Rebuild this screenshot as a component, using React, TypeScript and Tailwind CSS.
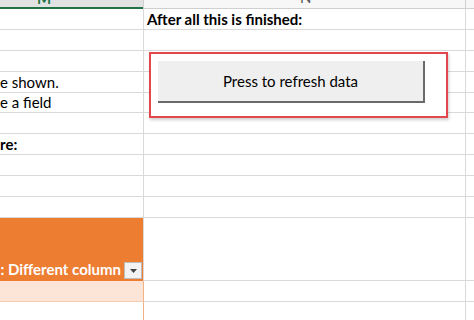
const rows = [
  { h: 21, m: "", n: "After all this is finished:", nBold: true },
  { h: 21, m: "", n: "" },
  { h: 21, m: "", n: "" },
  { h: 21, m: "e shown.", n: "" },
  { h: 20, m: "e a field", n: "" },
  { h: 21, m: "", n: "" },
  { h: 21, m: "re:", mBold: true, n: "" },
  { h: 21, m: "", n: "" },
  { h: 21, m: "", n: "" },
  { h: 21, m: "", n: "" },
];

const Cell = ({
  text,
  bold,
  className,
}: {
  text?: string;
  bold?: boolean;
  className?: string;
}) => (
  <div
    className={`flex items-end overflow-hidden whitespace-nowrap border-b border-[#d9d9d9] pb-[1px] ${className ?? ""}`}
  >
    <span className={bold ? "font-bold" : ""}>{text}</span>
  </div>
);

export default function App() {
  return (
    <div
      className="relative h-[320px] w-[474px] overflow-hidden bg-white text-[15px] leading-[18px] text-black"
      style={{ fontFamily: "Lato, 'Liberation Sans', sans-serif" }}
    >
      {/* column headers */}
      <div className="flex h-[9px]">
        <div className="relative w-[143px] overflow-hidden border-b-2 border-[#217346] bg-[#e2e2e2]">
          <span className="absolute left-[37px] top-[-11px] font-bold text-[#217346]">M</span>
        </div>
        <div className="relative w-[322px] overflow-hidden border-b border-l border-[#cfcfcf] bg-[#f7f7f7]">
          <span className="absolute left-[156px] top-[-12px] text-[#555]">N</span>
        </div>
        <div className="flex-1 border-b border-l border-[#cfcfcf] bg-[#f7f7f7]" />
      </div>

      {rows.map((r, i) => (
        <div key={i} className="flex" style={{ height: r.h }}>
          <Cell text={r.m} bold={r.mBold} className="w-[143px]" />
          <Cell
            text={r.n}
            bold={r.nBold}
            className="w-[322px] border-l border-l-[#d9d9d9] pl-[3px]"
          />
          <Cell className="flex-1 border-l border-l-[#d9d9d9]" />
        </div>
      ))}

      {/* orange table header */}
      <div className="flex h-[63px]">
        <div className="flex w-[143px] items-end justify-end gap-[3px] bg-[#ed7d31] pb-[2px] pr-[1px]">
          <span className="mb-[1px] whitespace-nowrap font-bold text-white">: Different column</span>
          <div className="flex h-[17px] w-[18px] items-center justify-center border border-[#bdbdbd] bg-[#f3f3f3]">
            <svg width="7" height="4" viewBox="0 0 7 4">
              <path d="M0 0 L7 0 L3.5 4 Z" fill="#444" />
            </svg>
          </div>
        </div>
        <div className="w-[322px] border-b border-l border-[#d9d9d9]" />
        <div className="flex-1 border-b border-l border-[#d9d9d9]" />
      </div>

      <div className="flex h-[21px]">
        <div className="w-[143px] border-b border-[#f8cbad] bg-[#fce4d6]" />
        <div className="w-[322px] border-b border-l border-[#d9d9d9] border-l-[#f4b183]" />
        <div className="flex-1 border-b border-l border-[#d9d9d9]" />
      </div>
      <div className="flex h-[21px]">
        <div className="w-[143px] border-b border-[#d9d9d9]" />
        <div className="w-[322px] border-b border-l border-[#d9d9d9] border-l-[#f4b183]" />
        <div className="flex-1 border-b border-l border-[#d9d9d9]" />
      </div>

      {/* selected shape with form button */}
      <div className="absolute left-[149px] top-[52px] flex h-[66px] w-[299px] items-start border-2 border-[#e4464e] bg-white pl-[7px] pt-[7px] shadow-[1px_2px_3px_rgba(0,0,0,0.2)]">
        <div className="flex h-[42px] w-[267px] items-center justify-center border-b-2 border-r-2 border-[#6a6a6a] bg-[#efefef]">
          <span className="text-[15px]">Press to refresh data</span>
        </div>
      </div>
    </div>
  );
}
